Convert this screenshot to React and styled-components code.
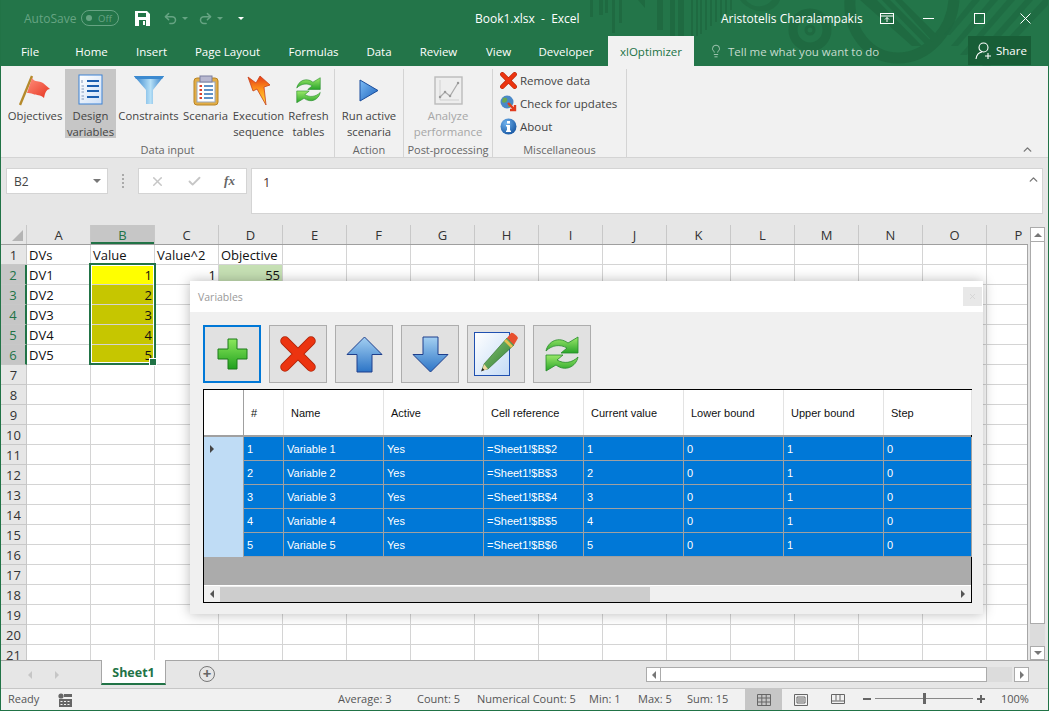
import React from 'react';
import styled, { createGlobalStyle } from 'styled-components';
import { Lightbulb, Undo2, Redo2, X, Check, ChevronUp } from 'lucide-react';

const UI_FONT = '"Open Sans", "Noto Sans", sans-serif';
const GRID_FONT = '"Liberation Sans", Arial, sans-serif';

const GlobalStyle = createGlobalStyle`
  * { box-sizing: border-box; }
  html, body { margin: 0; padding: 0; background: #fff; }
  body { font-family: ${UI_FONT}; }
`;

const Frame = styled.div`
  position: relative;
  width: 1049px;
  height: 711px;
  overflow: hidden;
  display: flex;
  flex-direction: column;
  border: 1px solid #217346;
  border-top: none;
  background: #e6e6e6;
  font-size: 11.5px;
  color: #444;
`;

/* title + tabs */
const Header = styled.header`
  position: relative;
  height: 66px;
  margin: 0 -1px;
  background: #237549;
  flex: none;
`;

const Pattern = styled.svg`
  position: absolute;
  left: 560px;
  top: 0;
`;

const TitleBar = styled.div`
  position: relative;
  height: 36px;
  display: flex;
  align-items: center;
  color: #fff;
`;

const AutoSave = styled.span`
  margin-left: 24px;
  width: 57px;
  color: #66a483;
  font-size: 12px;
`;

const Toggle = styled.span`
  width: 38px;
  height: 16px;
  border: 1px solid #66a483;
  border-radius: 8px;
  display: flex;
  align-items: center;
  gap: 6px;
  padding-left: 4px;
  color: #66a483;
  font-size: 9.5px;
  &::before {
    content: '';
    width: 6px;
    height: 6px;
    border-radius: 50%;
    background: #66a483;
  }
`;

const Quick = styled.div`
  margin-left: 16px;
  width: 340px;
  display: flex;
  align-items: center;
  gap: 4px;
  color: #66a483;
`;

const QuickGap = styled.span`
  width: ${p => p.$w}px;
`;

const Caret = styled.i`
  width: 0;
  height: 0;
  border-left: 3px solid transparent;
  border-right: 3px solid transparent;
  border-top: 3px solid ${p => p.$color || '#66a483'};
  margin-right: ${p => p.$mr || 0}px;
`;

const DocTitle = styled.span`
  width: 246px;
  font-size: 12px;
  white-space: pre;
`;

const UserName = styled.span`
  width: 159px;
  font-size: 12px;
`;

const WinButtons = styled.div`
  display: flex;
  align-items: center;
`;

const WinButton = styled.span`
  width: ${p => p.$w}px;
  display: flex;
  align-items: center;
`;

const TabBar = styled.nav`
  position: relative;
  height: 30px;
  display: flex;
  align-items: stretch;
  color: #fff;
  font-size: 11.5px;
`;

const Tab = styled.span`
  width: ${p => p.$w}px;
  display: flex;
  align-items: center;
  justify-content: center;
  padding-top: 1px;
  margin-left: ${p => p.$active ? 2 : 0}px;
  ${p => p.$active && 'background: #f1f1f1; color: #217346;'}
`;

const TellMe = styled.span`
  margin-left: 15px;
  width: 259px;
  display: flex;
  align-items: center;
  gap: 5px;
  color: #c5dccf;
`;

const ShareButton = styled.span`
  width: 63px;
  height: 29px;
  background: #185e37;
  display: flex;
  align-items: center;
  gap: 5px;
  padding-left: 7px;
`;

/* ribbon */
const Ribbon = styled.section`
  position: relative;
  height: 92px;
  flex: none;
  display: flex;
  background: #f1f1f1;
  border-bottom: 1px solid #d4d4d4;
`;

const Group = styled.div`
  width: ${p => p.$w}px;
  height: 88px;
  margin-top: 3px;
  border-right: ${p => p.$last ? 'none' : '1px solid #d4d4d4'};
  display: flex;
  flex-direction: column;
`;

const GroupItems = styled.div`
  height: 69px;
  display: flex;
  padding-left: ${p => p.$pl || 0}px;
  flex-direction: ${p => p.$column ? 'column' : 'row'};
`;

const GroupLabel = styled.div`
  margin-top: 5px;
  text-align: center;
  color: #666;
  font-size: 11px;
  line-height: 14px;
`;

const BigButton = styled.div`
  width: ${p => p.$w}px;
  height: 69px;
  display: flex;
  flex-direction: column;
  align-items: center;
  text-align: center;
  line-height: 16px;
  font-size: 11.3px;
  white-space: pre-line;
  color: ${p => p.$disabled ? '#a6a6a6' : '#444'};
  background: ${p => p.$active ? '#c6c6c6' : 'transparent'};
`;

const BigIcon = styled.div`
  height: 39px;
  flex: none;
  width: 100%;
  display: flex;
  align-items: center;
  justify-content: center;
  padding-top: 3px;
`;

const SmallButton = styled.div`
  height: 23px;
  display: flex;
  align-items: center;
  gap: 3px;
  font-size: 11.5px;
`;

const Collapse = styled.span`
  position: absolute;
  right: 14px;
  bottom: 1px;
  color: #777;
  display: flex;
`;

/* formula bar */
const FormulaBar = styled.div`
  height: 67px;
  flex: none;
  display: flex;
  align-items: flex-start;
  padding: 10px 5px 0;
`;

const NameBox = styled.div`
  width: 102px;
  height: 26px;
  background: #fff;
  border: 1px solid #d4d4d4;
  display: flex;
  align-items: center;
  justify-content: space-between;
  padding: 0 6px 0 7px;
  font-size: 12px;
`;

const DownCaret = styled.i`
  width: 0;
  height: 0;
  border-left: ${p => p.$s || 4}px solid transparent;
  border-right: ${p => p.$s || 4}px solid transparent;
  border-top: ${p => p.$s || 4}px solid ${p => p.$color || '#777'};
`;

const Grip = styled.div`
  width: 30px;
  height: 26px;
  display: flex;
  flex-direction: column;
  align-items: center;
  justify-content: center;
  gap: 2px;
  & > i { width: 2px; height: 2px; background: #aaa; }
`;

const FxBox = styled.div`
  width: 109px;
  height: 26px;
  background: #fff;
  border: 1px solid #d4d4d4;
  display: flex;
  align-items: center;
  justify-content: space-around;
  color: #c6c6c6;
`;

const FxLabel = styled.span`
  font-family: "Liberation Serif", serif;
  font-style: italic;
  font-weight: bold;
  color: #666;
  font-size: 13px;
`;

const FormulaInput = styled.div`
  position: relative;
  margin-left: 4px;
  flex: 1;
  height: 46px;
  background: #fff;
  border: 1px solid #d4d4d4;
  padding: 4px 11px;
  font-size: 13px;
  color: #503030;
`;

const FormulaChevron = styled.span`
  position: absolute;
  right: 2px;
  top: 4px;
  color: #777;
  display: flex;
`;

/* sheet */
const SheetArea = styled.div`
  height: 435px;
  flex: none;
  display: flex;
`;

const Sheet = styled.div`
  width: 1027px;
  display: flex;
  flex-direction: column;
  font-size: 13px;
`;

const HeaderRow = styled.div`
  display: flex;
  height: 20px;
  flex: none;
  border-bottom: 1px solid #9f9f9f;
  overflow: hidden;
`;

const Corner = styled.div`
  width: 26px;
  flex: none;
  position: relative;
  border-right: 1px solid #c8c8c8;
  &::after {
    content: '';
    position: absolute;
    right: 3px;
    bottom: 3px;
    border-left: 11px solid transparent;
    border-bottom: 11px solid #b4b4b4;
  }
`;

const ColHead = styled.div`
  width: 64px;
  flex: none;
  display: flex;
  align-items: center;
  justify-content: center;
  color: ${p => p.$sel ? '#217346' : '#333'};
  background: ${p => p.$sel ? '#c6c6c6' : 'transparent'};
  border-right: 1px solid #c8c8c8;
  ${p => p.$sel && 'box-shadow: inset 0 -2px 0 #217346;'}
`;

const SheetBody = styled.div`
  position: relative;
  flex: 1;
  overflow: hidden;
  background: #fff;
  border-right: 1px solid #a6a6a6;
`;

const Row = styled.div`
  display: flex;
  height: 20px;
`;

const RowHead = styled.div`
  width: 26px;
  flex: none;
  display: flex;
  align-items: center;
  justify-content: center;
  padding-top: 1px;
  background: ${p => p.$sel ? '#c6c6c6' : '#e6e6e6'};
  color: ${p => p.$sel ? '#217346' : '#333'};
  border-right: ${p => p.$sel ? '2px solid #217346' : '1px solid #c8c8c8'};
  border-bottom: 1px solid #c8c8c8;
  font-size: 13px;
`;

const Cell = styled.div`
  width: 64px;
  flex: none;
  border-right: 1px solid #d4d4d4;
  border-bottom: 1px solid #d4d4d4;
  padding: 0 2px;
  line-height: 20px;
  color: #111;
  white-space: nowrap;
  text-align: ${p => p.$right ? 'right' : 'left'};
  background: ${p => p.$bg || '#fff'};
`;

const Selection = styled.div`
  position: absolute;
  left: 88px;
  top: 18px;
  width: 67px;
  height: 102px;
  border: 2px solid #217346;
  box-shadow: inset 0 0 0 1px #fff;
  &::after {
    content: '';
    position: absolute;
    right: -3px;
    bottom: -3px;
    width: 6px;
    height: 6px;
    background: #217346;
    border: 1px solid #fff;
  }
`;

const VScroll = styled.div`
  width: 20px;
  padding: 2px 3px 0 2px;
  display: flex;
  flex-direction: column;
`;

const ScrollButton = styled.div`
  width: ${p => p.$w || 15}px;
  height: ${p => p.$h || 15}px;
  flex: none;
  background: #fff;
  border: 1px solid #ababab;
  display: flex;
  align-items: center;
  justify-content: center;
`;

const UpCaret = styled.i`
  width: 0;
  height: 0;
  border-left: 4px solid transparent;
  border-right: 4px solid transparent;
  border-bottom: 4px solid #777;
`;

const SideCaret = styled.i`
  width: 0;
  height: 0;
  border-top: 4px solid transparent;
  border-bottom: 4px solid transparent;
  ${p => p.$left
    ? `border-right: 4px solid ${p.$color || '#777'};`
    : `border-left: 4px solid ${p.$color || '#777'};`}
`;

const VThumb = styled.div`
  height: 382px;
  flex: none;
  background: #fff;
  border: 1px solid #ababab;
  border-top: none;
`;

const Track = styled.div`
  flex: 1;
  background: #dcdcdc;
`;

/* sheet tabs */
const TabStrip = styled.div`
  height: 28px;
  flex: none;
  display: flex;
  border-top: 1px solid #a6a6a6;
  margin-right: -1px;
`;

const TabNav = styled.div`
  width: 100px;
  display: flex;
  align-items: center;
  gap: 23px;
  padding-left: 27px;
`;

const SheetTab = styled.div`
  width: 65px;
  height: 25px;
  margin-top: -1px;
  padding-top: 1px;
  background: #fff;
  border: 1px solid #a6a6a6;
  border-top: none;
  border-bottom: 2px solid #217346;
  color: #217346;
  font-weight: 700;
  font-size: 12.5px;
  display: flex;
  align-items: center;
  justify-content: center;
`;

const AddSheet = styled.div`
  width: 16px;
  height: 16px;
  margin: 5px 0 0 33px;
  border: 1px solid #777;
  border-radius: 50%;
  color: #666;
  font-size: 15px;
  line-height: 13px;
  text-align: center;
  font-weight: 700;
`;

const HScroll = styled.div`
  width: 383px;
  height: 15px;
  margin: 6px 0 0 431px;
  display: flex;
`;

const HThumb = styled.div`
  width: 326px;
  flex: none;
  background: #fff;
  border: 1px solid #ababab;
  border-left: none;
`;

const HTrack = styled.div`
  flex: 1;
  margin-right: 2px;
  background: #dcdcdc;
`;

/* status bar */
const StatusBar = styled.footer`
  height: 22px;
  flex: none;
  display: flex;
  align-items: center;
  padding-bottom: 2px;
  background: #f1f1f1;
  border-top: 1px solid #c6c6c6;
  font-size: 11px;
  color: #555;
`;

const StatusText = styled.span`
  width: ${p => p.$w}px;
  flex: none;
  white-space: nowrap;
  padding-left: ${p => p.$pl || 0}px;
`;

const ViewButton = styled.span`
  width: ${p => p.$w || 37}px;
  height: 21px;
  margin-bottom: -2px;
  flex: none;
  display: flex;
  align-items: center;
  justify-content: center;
  background: ${p => p.$active ? '#c6c6c6' : 'transparent'};
`;

const ZoomSlider = styled.div`
  position: relative;
  width: 98px;
  height: 1px;
  background: #888;
  margin: 0 4px;
  &::after {
    content: '';
    position: absolute;
    left: 48px;
    top: -5px;
    width: 3px;
    height: 11px;
    background: #666;
  }
`;

const ZoomSign = styled.span`
  width: 8px;
  flex: none;
  height: 2px;
  background: #666;
  position: relative;
  ${p => p.$plus && `
    &::after {
      content: '';
      position: absolute;
      left: 3px;
      top: -3px;
      width: 2px;
      height: 8px;
      background: #666;
    }
  `}
`;

/* variables dialog */
const Dialog = styled.div`
  position: absolute;
  left: 189px;
  top: 281px;
  width: 793px;
  height: 333px;
  background: #f0f0f0;
  box-shadow: 0 0 12px rgba(0, 0, 0, .28);
  font-family: ${GRID_FONT};
  font-size: 11px;
`;

const DialogTitle = styled.div`
  height: 31px;
  background: #fff;
  display: flex;
  align-items: center;
  justify-content: space-between;
  padding: 0 1px 0 8px;
  color: #999;
  font-family: ${UI_FONT};
  font-size: 10.5px;
`;

const DialogClose = styled.span`
  width: 19px;
  height: 19px;
  background: #e8e8e8;
  color: #d2d2d2;
  display: flex;
  align-items: center;
  justify-content: center;
`;

const Toolbar = styled.div`
  display: flex;
  gap: 8px;
  padding: 13px 0 6px 13px;
`;

const ToolButton = styled.div`
  width: 58px;
  height: 58px;
  background: #e1e1e1;
  border: ${p => p.$focused ? '2px solid #0078d7' : '1px solid #adadad'};
  display: flex;
  align-items: center;
  justify-content: center;
`;

const DataGrid = styled.div`
  margin-left: 13px;
  width: 769px;
  height: 214px;
  border: 1px solid #000;
  display: flex;
  flex-direction: column;
  background: #ababab;
`;

const GridHead = styled.div`
  height: 47px;
  flex: none;
  display: flex;
  background: #fff;
  border-bottom: 2px solid #a0a0a0;
`;

const HeadCell = styled.div`
  width: ${p => p.$w}px;
  flex: none;
  padding-left: 7px;
  display: flex;
  align-items: center;
  color: #111;
  border-right: 1px solid ${p => p.$first ? '#a0a0a0' : '#e3e3e3'};
`;

const GridRow = styled.div`
  height: 24px;
  flex: none;
  display: flex;
  background: #0078d7;
`;

const RowMark = styled.div`
  width: 40px;
  flex: none;
  background: #bfdcf5;
  border-right: 1px solid #a0a0a0;
  display: flex;
  align-items: center;
  padding-left: 6px;
`;

const DataCell = styled.div`
  width: ${p => p.$w}px;
  flex: none;
  padding-left: 3px;
  display: flex;
  align-items: center;
  color: #fff;
  border-right: 1px solid #a0a0a0;
  border-bottom: 1px solid #a0a0a0;
`;

const GridSpace = styled.div`
  flex: 1;
`;

const GridScroll = styled.div`
  height: 17px;
  flex: none;
  border-top: 1px solid #fff;
  background: #f0f0f0;
  display: flex;
  align-items: center;
`;

const GridThumb = styled.div`
  width: 430px;
  height: 15px;
  background: #cdcdcd;
`;

const GridArrow = styled.span`
  width: ${p => p.$w}px;
  flex: none;
  display: flex;
  justify-content: center;
  ${p => p.$end && 'margin-left: auto;'}
  color: #555;
`;

/* drawings */
const FlagIcon = () => (
  <svg width="32" height="32" viewBox="0 0 32 32">
    <defs>
      <linearGradient id="flag" x1="0" y1="0" x2="1" y2="1">
        <stop offset="0" stopColor="#ff8f7c" />
        <stop offset="1" stopColor="#e63420" />
      </linearGradient>
    </defs>
    <path d="M1 31L13 2" stroke="#b58a2c" strokeWidth="2.4" fill="none" />
    <path d="M13 4C16 9 20 6 24 9L31 15C28 15 26 18 25 24C21 20 18 22 14 20C12 19 10 19 8 19Z" fill="url(#flag)" />
  </svg>
);

const ListIcon = () => (
  <svg width="26" height="32" viewBox="0 0 26 32">
    <defs>
      <linearGradient id="sheet" x1="0" y1="0" x2="1" y2="1">
        <stop offset="0" stopColor="#fff" />
        <stop offset="1" stopColor="#cfe0f6" />
      </linearGradient>
    </defs>
    <rect x="1" y="1" width="23" height="29" fill="url(#sheet)" stroke="#3d82d4" />
    <path d="M9 7H21M9 12H21M9 17H21M9 23H21" stroke="#1c5fb0" strokeWidth="2" />
    <path d="M4 6V9M3.5 12H6M3.5 15H6M3.5 18H6M3.5 22H6M3.5 25H6" stroke="#8297b8" strokeWidth="1" />
  </svg>
);

const FunnelIcon = () => (
  <svg width="30" height="30" viewBox="0 0 30 30">
    <defs>
      <linearGradient id="funnel" x1="0" y1="0" x2="1" y2="0">
        <stop offset="0" stopColor="#2f7fca" />
        <stop offset=".55" stopColor="#b6e0f7" />
        <stop offset="1" stopColor="#2b78c4" />
      </linearGradient>
    </defs>
    <path d="M0 1H30L19 15V29H12V15Z" fill="url(#funnel)" />
    <path d="M0 1H30L28 4H2Z" fill="#3c8ad0" />
  </svg>
);

const ClipboardIcon = () => (
  <svg width="26" height="31" viewBox="0 0 26 31">
    <rect x="1" y="3" width="24" height="27" rx="3" fill="#e2ad46" stroke="#b98424" />
    <rect x="4" y="7" width="18" height="20" fill="#fff" stroke="#9aa9bf" />
    <rect x="7" y="1" width="12" height="6" fill="#b8b8d0" stroke="#7b7ea0" />
    <path d="M11 11H20M11 15H20M11 19H20M11 23H20" stroke="#2d6fb4" strokeWidth="1.4" />
    <path d="M6.5 11H9M6.5 15H9M6.5 19H9M6.5 23H9" stroke="#d8402c" strokeWidth="2" />
  </svg>
);

const BoltIcon = () => (
  <svg width="24" height="31" viewBox="0 0 24 31">
    <defs>
      <linearGradient id="bolt" x1="0" y1="0" x2="0" y2="1">
        <stop offset="0" stopColor="#e63a16" />
        <stop offset=".5" stopColor="#ff9a1c" />
        <stop offset="1" stopColor="#ffdf40" />
      </linearGradient>
    </defs>
    <path d="M1 2L9 8L13 1L23 10L17 12L19 30L10 14L6 16Z" fill="url(#bolt)" stroke="#c8401a" strokeWidth=".8" />
  </svg>
);

const RefreshIcon = ({ size = 25, id = 'rf' }) => (
  <svg width={size} height={size * 36 / 34} viewBox="0 0 34 36">
    <defs>
      <linearGradient id={id} x1="0" y1="0" x2="0" y2="1">
        <stop offset="0" stopColor="#9be86a" />
        <stop offset="1" stopColor="#2aa52a" />
      </linearGradient>
    </defs>
    <path d="M1 15C3 5 14 0 23 7L33 1V17H16L22 12C15 8 7 9 1 15Z" fill={`url(#${id})`} stroke="#248a2a" strokeWidth=".8" />
    <path d="M33 21C31 31 20 36 11 29L1 35V19H18L12 24C19 28 27 27 33 21Z" fill={`url(#${id})`} stroke="#248a2a" strokeWidth=".8" />
  </svg>
);

const PlayIcon = () => (
  <svg width="20" height="23" viewBox="0 0 20 23">
    <defs>
      <linearGradient id="play" x1="0" y1="0" x2="1" y2="1">
        <stop offset="0" stopColor="#7dbcf5" />
        <stop offset="1" stopColor="#1b62bc" />
      </linearGradient>
    </defs>
    <path d="M1 1L19 11.5L1 22Z" fill="url(#play)" stroke="#1b4d9c" />
  </svg>
);

const ChartIcon = () => (
  <svg width="29" height="29" viewBox="0 0 29 29">
    <rect x="1" y="1" width="27" height="27" fill="#eee" stroke="#bbb" strokeWidth="1.4" />
    <path d="M6 4V24H25" stroke="#d0d0d0" fill="none" />
    <path d="M6 21L11 16L16 20L24 7" stroke="#aaa" fill="none" strokeWidth="1.2" />
    <path d="M6 21h.1M11 16h.1M16 20h.1M24 7h.1" stroke="#999" strokeWidth="2.4" strokeLinecap="round" />
  </svg>
);

const CrossIcon = ({ size = 17 }) => (
  <svg width={size} height={size} viewBox="0 0 36 36">
    <path d="M5 5L31 31M31 5L5 31" stroke="#b02408" strokeWidth="9.5" strokeLinecap="round" />
    <path d="M5 5L31 31M31 5L5 31" stroke="#ec3410" strokeWidth="7.5" strokeLinecap="round" />
  </svg>
);

const GlobeIcon = () => (
  <svg width="17" height="17" viewBox="0 0 17 17">
    <circle cx="7" cy="7" r="6.5" fill="#4a88c8" />
    <path d="M3 3C6 2 8 3 7 6C6 8 4 8 2 7ZM9 8C11 8 12 9 11 12L8 12Z" fill="#6aa84f" />
    <path d="M8 8L15 15M15 10V15H10" stroke="#e03c20" strokeWidth="2.4" fill="none" />
  </svg>
);

const InfoIcon = () => (
  <svg width="17" height="17" viewBox="0 0 17 17">
    <defs>
      <radialGradient id="info" cx=".35" cy=".3" r=".8">
        <stop offset="0" stopColor="#6fb2ee" />
        <stop offset="1" stopColor="#14539f" />
      </radialGradient>
    </defs>
    <circle cx="8.5" cy="8.5" r="8" fill="url(#info)" />
    <rect x="7" y="3" width="3" height="2.6" fill="#fff" />
    <path d="M6 7H10V12.4H11V14H6V12.4H7V8.6H6Z" fill="#fff" />
  </svg>
);

const PlusIcon = () => (
  <svg width="31" height="32" viewBox="0 0 31 32">
    <defs>
      <linearGradient id="plus" x1="0" y1="0" x2="0" y2="1">
        <stop offset="0" stopColor="#8ce85c" />
        <stop offset="1" stopColor="#1fa01e" />
      </linearGradient>
    </defs>
    <path d="M11 1H20V11H30V21H20V31H11V21H1V11H11Z" fill="url(#plus)" stroke="#1c7a1a" strokeLinejoin="round" />
  </svg>
);

const ArrowIcon = ({ down }) => (
  <svg width="37" height="37" viewBox="0 0 37 37" style={down ? { transform: 'rotate(180deg)' } : undefined}>
    <defs>
      <linearGradient id="arrowUp" x1="0" y1="0" x2="0" y2="1">
        <stop offset="0" stopColor="#a4d0f2" />
        <stop offset="1" stopColor="#2c74c6" />
      </linearGradient>
      <linearGradient id="arrowDown" x1="0" y1="1" x2="0" y2="0">
        <stop offset="0" stopColor="#a4d0f2" />
        <stop offset="1" stopColor="#2c74c6" />
      </linearGradient>
    </defs>
    <path d="M18.5 1L36 18.5H26V36H11V18.5H1Z" fill={down ? 'url(#arrowDown)' : 'url(#arrowUp)'} stroke="#1f3f8c" />
  </svg>
);

const EditIcon = () => (
  <svg width="46" height="46" viewBox="0 0 46 46">
    <defs>
      <linearGradient id="page" x1="0" y1="0" x2="1" y2="1">
        <stop offset="0" stopColor="#fff" />
        <stop offset="1" stopColor="#c4dbf6" />
      </linearGradient>
      <linearGradient id="pen" x1="0" y1="0" x2="1" y2="1">
        <stop offset="0" stopColor="#8cc878" />
        <stop offset="1" stopColor="#2b7a30" />
      </linearGradient>
    </defs>
    <rect x="1.5" y="1.5" width="35" height="43" fill="url(#page)" stroke="#1f50b0" />
    <g transform="translate(0 -3)">
      <path d="M11 36L34 10L41 17L15 41L9 42Z" fill="url(#pen)" stroke="#2a6a2a" strokeWidth=".6" />
      <path d="M34 10L38 5C40 4 44 8 45 10L41 17Z" fill="#e8502e" />
      <path d="M33 11L40 18L38 20L31 13Z" fill="#e8c050" />
      <path d="M11 36L15 41L9 43Z" fill="#f0d8a0" />
      <path d="M9.5 40L11.5 42L8 43.5Z" fill="#222" />
    </g>
  </svg>
);

const TitlePattern = () => (
  <Pattern width="489" height="66" viewBox="0 0 489 66">
    <g fill="#1f6a41">
      <path d="M30 0h3v17h-3zM39 0h4v15h-4zM45 0h3v13h-3zM52 0h3v33h-3zM59 0h3v23h-3z" />
      <path d="M78 0h7v8z" />
      <path d="M97 0h6v30h-6zM110 0h5v36h-5zM118 0h6v36h-6zM131 0h2v36h-2zM136 0h2v36h-2zM140 0h2v34h-2zM145 0h2v30h-2zM150 0h2v26h-2zM155 0h2v22h-2zM160 0h2v18h-2zM165 0h2v14h-2zM170 0h2v10h-2z" />
      <path d="M186 0C192 8 205 9 212 0H220C214 15 192 15 180 0Z" opacity=".7" />
    </g>
    <g fill="none" stroke="#1f6a41">
      <circle cx="250" cy="30" r="17" strokeWidth="9" />
      <circle cx="250" cy="30" r="4" strokeWidth="3" />
      <path d="M290 0C288 30 308 58 338 58C368 58 392 30 394 0" strokeWidth="11" />
    </g>
    <path d="M300 0H317L362 46H352ZM322 0H330L372 42L367 46ZM335 0H342L378 36L373 42Z" fill="#1f6a41" />
    <path d="M412 0h8L390 35h-6zM430 0h8L398 46h-7zM447 0h8L407 55h-7zM465 0h8L418 62h-8zM483 0h6v4L430 66h-8z" fill="#1f6a41" opacity=".75" />
  </Pattern>
);

const SaveIcon = () => (
  <svg width="15" height="15" viewBox="0 0 15 15">
    <path d="M0 0H12L15 3V15H0Z" fill="#fff" />
    <rect x="3" y="2" width="8" height="4" fill="#237549" />
    <rect x="4" y="9" width="7" height="6" fill="#237549" />
    <rect x="8" y="10" width="2" height="4" fill="#fff" />
  </svg>
);

const ScreenUpIcon = () => (
  <svg width="14" height="11" viewBox="0 0 14 11" fill="none" stroke="#fff">
    <rect x=".5" y=".5" width="13" height="10" />
    <path d="M1 3H13M7 9V4.5M5 6.5L7 4.5L9 6.5" />
  </svg>
);

const ShareIcon = () => (
  <svg width="16" height="18" viewBox="0 0 16 18" fill="none" stroke="#fff" strokeWidth="1.1">
    <circle cx="8.5" cy="5.5" r="4.5" />
    <path d="M1 17C1.5 13 4 10.5 7 10M10 14H16M13 11V17" />
  </svg>
);

const MacroIcon = () => (
  <svg width="14" height="14" viewBox="0 0 14 14" fill="#666">
    <circle cx="3" cy="3" r="2.6" />
    <rect x="6" y="1" width="8" height="3" />
    <path d="M1 6H14V14H1ZM2.5 8v1h2V8zM6 8v1h2V8zM9.5 8v1h2V8zM2.5 11v1h2v-1zM6 11v1h2v-1zM9.5 11v1h2v-1z" fillRule="evenodd" />
  </svg>
);

const NormalViewIcon = () => (
  <svg width="14" height="12" viewBox="0 0 14 12" fill="none" stroke="#666">
    <path d="M.5.5h13v11H.5zM.5 4h13M.5 8h13M4.8.5v11M9.2.5v11" />
  </svg>
);

const PageViewIcon = () => (
  <svg width="14" height="12" viewBox="0 0 14 12" fill="none" stroke="#666">
    <path d="M.5.5h13v11H.5zM3 3v6h8V3zM4 5h6M4 7h6" />
  </svg>
);

const BreakViewIcon = () => (
  <svg width="14" height="12" viewBox="0 0 14 12" fill="none" stroke="#666">
    <path d="M.5.5h13v9H.5zM.5 7h13M5 .5v6M9 .5v6" />
  </svg>
);

const colLetters = 'ABCDEFGHIJKLMNOP'.split('');

const sheetData = {
  1: { A: 'DVs', B: 'Value', C: 'Value^2', D: 'Objective' },
  2: { A: 'DV1', B: 1, C: 1, D: 55 },
  3: { A: 'DV2', B: 2 },
  4: { A: 'DV3', B: 3 },
  5: { A: 'DV4', B: 4 },
  6: { A: 'DV5', B: 5 },
};

const cellFill = (row, col) => {
  if (col === 'B' && row === 2) return '#ffff00';
  if (col === 'B' && row > 2 && row < 7) return '#c6c600';
  if (col === 'D' && row === 2) return '#c6e0b4';
  return undefined;
};

const rows = Array.from({ length: 21 }, (_, i) => i + 1);

const gridCols = [
  { title: '#', w: 40, key: 'n' },
  { title: 'Name', w: 100, key: 'name' },
  { title: 'Active', w: 100, key: 'active' },
  { title: 'Cell reference', w: 100, key: 'ref' },
  { title: 'Current value', w: 100, key: 'value' },
  { title: 'Lower bound', w: 100, key: 'lower' },
  { title: 'Upper bound', w: 100, key: 'upper' },
  { title: 'Step', w: 88, key: 'step' },
];

const variables = [1, 2, 3, 4, 5].map(n => ({
  n,
  name: `Variable ${n}`,
  active: 'Yes',
  ref: `=Sheet1!$B$${n + 1}`,
  value: n,
  lower: 0,
  upper: 1,
  step: 0,
}));

const tabs = [
  ['File', 60], ['Home', 63], ['Insert', 57], ['Page Layout', 95], ['Formulas', 77],
  ['Data', 54], ['Review', 65], ['View', 55], ['Developer', 80],
];

export default function App() {
  return (
    <>
      <GlobalStyle />
      <Frame>
        <Header>
          <TitlePattern />
          <TitleBar>
            <AutoSave>AutoSave</AutoSave>
            <Toggle>Off</Toggle>
            <Quick>
              <SaveIcon />
              <QuickGap $w={5} />
              <Undo2 size={15} strokeWidth={2.4} />
              <Caret />
              <QuickGap $w={2} />
              <Redo2 size={15} strokeWidth={2.4} />
              <Caret $mr={11} />
              <Caret $color="#fff" />
            </Quick>
            <DocTitle>{'Book1.xlsx  -  Excel'}</DocTitle>
            <UserName>Aristotelis Charalampakis</UserName>
            <WinButtons>
              <WinButton $w={43}><ScreenUpIcon /></WinButton>
              <WinButton $w={51}><svg width="11" height="1"><rect width="11" height="1" fill="#fff" /></svg></WinButton>
              <WinButton $w={46}><svg width="11" height="11" fill="none" stroke="#fff"><rect x=".5" y=".5" width="10" height="10" /></svg></WinButton>
              <WinButton $w={16}><svg width="11" height="11" stroke="#fff"><path d="M.5.5L10.5 10.5M10.5.5L.5 10.5" /></svg></WinButton>
            </WinButtons>
          </TitleBar>
          <TabBar>
            {tabs.map(([label, w]) => <Tab key={label} $w={w}>{label}</Tab>)}
            <Tab $w={86} $active>xlOptimizer</Tab>
            <TellMe><Lightbulb size={14} strokeWidth={1.3} />Tell me what you want to do</TellMe>
            <ShareButton><ShareIcon />Share</ShareButton>
          </TabBar>
        </Header>

        <Ribbon>
          <Group $w={334}>
            <GroupItems $pl={4}>
              <BigButton $w={60}><BigIcon><FlagIcon /></BigIcon>Objectives</BigButton>
              <BigButton $w={51} $active><BigIcon><ListIcon /></BigIcon>{'Design\nvariables'}</BigButton>
              <BigButton $w={65}><BigIcon><FunnelIcon /></BigIcon>Constraints</BigButton>
              <BigButton $w={49}><BigIcon><ClipboardIcon /></BigIcon>Scenaria</BigButton>
              <BigButton $w={57}><BigIcon><BoltIcon /></BigIcon>{'Execution\nsequence'}</BigButton>
              <BigButton $w={43}><BigIcon><RefreshIcon /></BigIcon>{'Refresh\ntables'}</BigButton>
            </GroupItems>
            <GroupLabel>Data input</GroupLabel>
          </Group>
          <Group $w={69}>
            <GroupItems>
              <BigButton $w={68}><BigIcon><PlayIcon /></BigIcon>{'Run active\nscenaria'}</BigButton>
            </GroupItems>
            <GroupLabel>Action</GroupLabel>
          </Group>
          <Group $w={89}>
            <GroupItems>
              <BigButton $w={88} $disabled><BigIcon><ChartIcon /></BigIcon>{'Analyze\nperformance'}</BigButton>
            </GroupItems>
            <GroupLabel>Post-processing</GroupLabel>
          </Group>
          <Group $w={134}>
            <GroupItems $pl={7} $column>
              <SmallButton><CrossIcon />Remove data</SmallButton>
              <SmallButton><GlobeIcon />Check for updates</SmallButton>
              <SmallButton><InfoIcon />About</SmallButton>
            </GroupItems>
            <GroupLabel>Miscellaneous</GroupLabel>
          </Group>
          <Collapse><ChevronUp size={13} strokeWidth={2.6} /></Collapse>
        </Ribbon>

        <FormulaBar>
          <NameBox>B2<DownCaret /></NameBox>
          <Grip><i /><i /><i /><i /></Grip>
          <FxBox>
            <X size={15} strokeWidth={2.4} />
            <Check size={15} strokeWidth={3} />
            <FxLabel>fx</FxLabel>
          </FxBox>
          <FormulaInput>
            1
            <FormulaChevron><ChevronUp size={13} strokeWidth={2.6} /></FormulaChevron>
          </FormulaInput>
        </FormulaBar>

        <SheetArea>
          <Sheet>
            <HeaderRow>
              <Corner />
              {colLetters.map(c => <ColHead key={c} $sel={c === 'B'}>{c}</ColHead>)}
            </HeaderRow>
            <SheetBody>
              {rows.map(r => (
                <Row key={r}>
                  <RowHead $sel={r >= 2 && r <= 6}>{r}</RowHead>
                  {colLetters.map(c => {
                    const value = sheetData[r]?.[c];
                    return (
                      <Cell key={c} $bg={cellFill(r, c)} $right={typeof value === 'number'}>
                        {value}
                      </Cell>
                    );
                  })}
                </Row>
              ))}
              <Selection />
            </SheetBody>
          </Sheet>
          <VScroll>
            <ScrollButton><UpCaret /></ScrollButton>
            <VThumb />
            <Track />
            <ScrollButton $h={14}><DownCaret $color="#777" /></ScrollButton>
          </VScroll>
        </SheetArea>

        <TabStrip>
          <TabNav>
            <SideCaret $left $color="#c6c6c6" />
            <SideCaret $color="#c6c6c6" />
          </TabNav>
          <SheetTab>Sheet1</SheetTab>
          <AddSheet>+</AddSheet>
          <HScroll>
            <ScrollButton><SideCaret $left /></ScrollButton>
            <HThumb />
            <HTrack />
            <ScrollButton><SideCaret /></ScrollButton>
          </HScroll>
        </TabStrip>

        <StatusBar>
          <StatusText $w={53} $pl={7}>Ready</StatusText>
          <ViewButton $w={22}><MacroIcon /></ViewButton>
          <StatusText $w={262} />
          <StatusText $w={79}>Average: 3</StatusText>
          <StatusText $w={60}>Count: 5</StatusText>
          <StatusText $w={112}>Numerical Count: 5</StatusText>
          <StatusText $w={49}>Min: 1</StatusText>
          <StatusText $w={49}>Max: 5</StatusText>
          <StatusText $w={58}>Sum: 15</StatusText>
          <ViewButton $active><NormalViewIcon /></ViewButton>
          <ViewButton><PageViewIcon /></ViewButton>
          <ViewButton><BreakViewIcon /></ViewButton>
          <StatusText $w={7} />
          <ZoomSign />
          <ZoomSlider />
          <ZoomSign $plus />
          <StatusText $w={16} />
          <StatusText $w={30}>100%</StatusText>
        </StatusBar>

        <Dialog>
          <DialogTitle>
            Variables
            <DialogClose><X size={9} strokeWidth={2} /></DialogClose>
          </DialogTitle>
          <Toolbar>
            <ToolButton $focused><PlusIcon /></ToolButton>
            <ToolButton><CrossIcon size={36} /></ToolButton>
            <ToolButton><ArrowIcon /></ToolButton>
            <ToolButton><ArrowIcon down /></ToolButton>
            <ToolButton><EditIcon /></ToolButton>
            <ToolButton><RefreshIcon size={34} id="rf2" /></ToolButton>
          </Toolbar>
          <DataGrid>
            <GridHead>
              <HeadCell $w={40} $first />
              {gridCols.map(c => <HeadCell key={c.key} $w={c.w}>{c.title}</HeadCell>)}
            </GridHead>
            {variables.map(v => (
              <GridRow key={v.n}>
                <RowMark>{v.n === 1 && <SideCaret $color="#444" />}</RowMark>
                {gridCols.map(c => <DataCell key={c.key} $w={c.w}>{v[c.key]}</DataCell>)}
              </GridRow>
            ))}
            <GridSpace />
            <GridScroll>
              <GridArrow $w={16}><SideCaret $left $color="#555" /></GridArrow>
              <GridThumb />
              <GridArrow $w={16} $end><SideCaret $color="#555" /></GridArrow>
            </GridScroll>
          </DataGrid>
        </Dialog>
      </Frame>
    </>
  );
}
